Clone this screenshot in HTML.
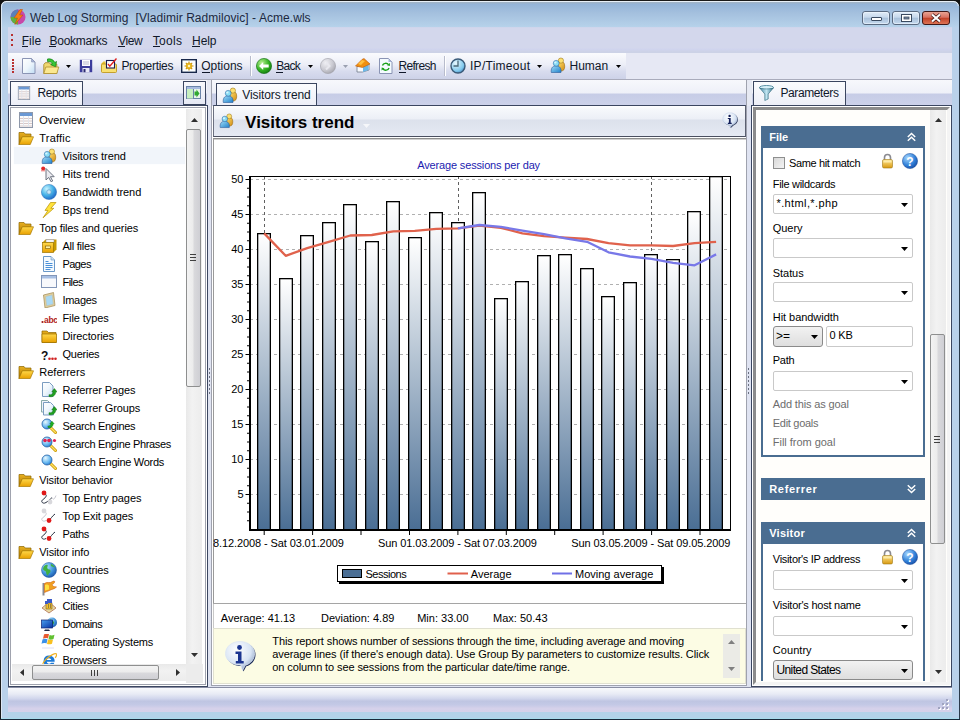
<!DOCTYPE html><html><head><meta charset="utf-8"><style>html,body{margin:0;padding:0;}body{width:960px;height:720px;position:relative;overflow:hidden;font-family:"Liberation Sans",sans-serif;}div,span,svg{position:absolute;}.t{white-space:nowrap;}</style></head><body><svg width="0" height="0" style="position:absolute"><defs>
<linearGradient id="gBlueP" x1="0" y1="0" x2="1" y2="1"><stop offset="0" stop-color="#9fdcf8"/><stop offset="1" stop-color="#1f7fc8"/></linearGradient>
<linearGradient id="gYelP" x1="0" y1="0" x2="1" y2="1"><stop offset="0" stop-color="#ffe070"/><stop offset="1" stop-color="#d08a10"/></linearGradient>
<linearGradient id="gFold" x1="0" y1="0" x2="0" y2="1"><stop offset="0" stop-color="#ffd84a"/><stop offset="1" stop-color="#e8a000"/></linearGradient>
<linearGradient id="gFoldB" x1="0" y1="0" x2="0" y2="1"><stop offset="0" stop-color="#e8b020"/><stop offset="1" stop-color="#b07800"/></linearGradient>
<radialGradient id="gDisc" cx="0.35" cy="0.3" r="0.8"><stop offset="0" stop-color="#c8f4ff"/><stop offset="0.5" stop-color="#48b4e8"/><stop offset="1" stop-color="#1858c0"/></radialGradient>
<radialGradient id="gGlobe" cx="0.35" cy="0.3" r="0.8"><stop offset="0" stop-color="#a8e0ff"/><stop offset="0.6" stop-color="#3a8ed8"/><stop offset="1" stop-color="#1a4ea0"/></radialGradient>
<radialGradient id="gLens" cx="0.35" cy="0.3" r="0.8"><stop offset="0" stop-color="#e8f8ff"/><stop offset="0.6" stop-color="#68b8f0"/><stop offset="1" stop-color="#2070c8"/></radialGradient>
<radialGradient id="gGreen" cx="0.35" cy="0.3" r="0.8"><stop offset="0" stop-color="#b8f090"/><stop offset="0.6" stop-color="#30b020"/><stop offset="1" stop-color="#107010"/></radialGradient>
<radialGradient id="gGray" cx="0.35" cy="0.3" r="0.8"><stop offset="0" stop-color="#f0f0f4"/><stop offset="0.6" stop-color="#c8c8d0"/><stop offset="1" stop-color="#a0a0a8"/></radialGradient>
<radialGradient id="gClock" cx="0.35" cy="0.3" r="0.8"><stop offset="0" stop-color="#e8f8ff"/><stop offset="0.7" stop-color="#80c8ec"/><stop offset="1" stop-color="#3a7ab8"/></radialGradient>
<radialGradient id="gHelp" cx="0.35" cy="0.3" r="0.8"><stop offset="0" stop-color="#a8d8ff"/><stop offset="0.6" stop-color="#3080d8"/><stop offset="1" stop-color="#1848a0"/></radialGradient>
<radialGradient id="gInfo" cx="0.4" cy="0.3" r="0.8"><stop offset="0" stop-color="#ffffff"/><stop offset="0.6" stop-color="#d8e4f4"/><stop offset="1" stop-color="#7890b8"/></radialGradient>
<linearGradient id="gDoc" x1="0" y1="0" x2="1" y2="1"><stop offset="0" stop-color="#ffffff"/><stop offset="0.5" stop-color="#eef6fc"/><stop offset="1" stop-color="#c0dcf4"/></linearGradient>
<linearGradient id="gLock" x1="0" y1="0" x2="0" y2="1"><stop offset="0" stop-color="#ffe890"/><stop offset="1" stop-color="#d89810"/></linearGradient>
<linearGradient id="gMon" x1="0" y1="0" x2="1" y2="1"><stop offset="0" stop-color="#4aa0f0"/><stop offset="1" stop-color="#0830a0"/></linearGradient>
<linearGradient id="gFunnel" x1="0" y1="0" x2="1" y2="0"><stop offset="0" stop-color="#4a8aa8"/><stop offset="0.5" stop-color="#c0e4f0"/><stop offset="1" stop-color="#3a7890"/></linearGradient>
<linearGradient id="gBtnMin" x1="0" y1="0" x2="0" y2="1"><stop offset="0" stop-color="#e4eef8"/><stop offset="0.45" stop-color="#c6d8ec"/><stop offset="0.5" stop-color="#a8c0da"/><stop offset="1" stop-color="#c8dcf0"/></linearGradient>
<linearGradient id="gBtnClose" x1="0" y1="0" x2="0" y2="1"><stop offset="0" stop-color="#eaa898"/><stop offset="0.45" stop-color="#d87060"/><stop offset="0.5" stop-color="#c04028"/><stop offset="1" stop-color="#e07858"/></linearGradient>
</defs></svg>
<div style="left:0px;top:0px;width:960px;height:720px;background:#b9d1ea;"></div>
<div style="left:0px;top:0px;width:960px;height:1px;background:#1a1a1a;"></div>
<div style="left:0px;top:0px;width:1px;height:720px;background:#1a1a1a;"></div>
<div style="left:959px;top:0px;width:1px;height:720px;background:#2a3a4a;"></div>
<div style="left:0px;top:719px;width:960px;height:1px;background:#1a2a3a;"></div>
<div style="left:1px;top:1px;width:958px;height:26px;background:linear-gradient(#e8f0f8 0px,#e8f0f8 1px,#a0b4c8 1px,#a0b4c8 2px,#94b4d8 3px,#a4c0de 12px,#b6d2ea 26px);"></div>
<div style="left:1px;top:1px;width:958px;height:1px;background:#e8f0f8;"></div>
<div style="left:1px;top:1px;width:1px;height:718px;background:#dde8f4;"></div>
<svg style="position:absolute;left:0px;top:0px;" width="6" height="6" viewBox="0 0 6 6"><path d="M0 0h6v1.2A4.8 4.8 0 0 0 1.2 6H0z" fill="#111"/><path d="M1.7 6A4.3 4.3 0 0 1 6 1.7" fill="none" stroke="#e8f0f8" stroke-width="1"/></svg>
<svg style="position:absolute;left:954px;top:0px;" width="6" height="6" viewBox="0 0 6 6"><path d="M6 0H0v1.2A4.8 4.8 0 0 1 4.8 6H6z" fill="#111"/><path d="M0 1.7A4.3 4.3 0 0 1 4.3 6" fill="none" stroke="#e8f0f8" stroke-width="1"/></svg>
<span class="t" style="left:30px;top:11.54px;font-size:12px;line-height:12px;color:#1c2840;letter-spacing:-0.057px;">Web Log Storming</span>
<span class="t" style="left:135.6px;top:11.54px;font-size:12px;line-height:12px;color:#1c2840;letter-spacing:0.053px;">[Vladimir Radmilovic] - Acme.wls</span>
<div style="left:8px;top:27px;width:944px;height:685px;background:#dfe3f1;"></div>
<div style="left:8px;top:27px;width:944px;height:26px;background:linear-gradient(#cad4ec 0px,#d3d7ec 1px,#d3d7ec 21px,#d0d4ee 22px,#ccd2e6 25px);"></div>
<span class="t" style="left:21.7px;top:34.84px;font-size:12px;line-height:12px;color:#10182a;letter-spacing:0.055px;">File</span>
<span class="t" style="left:49.5px;top:34.84px;font-size:12px;line-height:12px;color:#10182a;letter-spacing:-0.252px;">Bookmarks</span>
<span class="t" style="left:118.3px;top:34.84px;font-size:12px;line-height:12px;color:#10182a;letter-spacing:-0.464px;">View</span>
<span class="t" style="left:152.8px;top:34.84px;font-size:12px;line-height:12px;color:#10182a;letter-spacing:0.297px;">Tools</span>
<span class="t" style="left:192.1px;top:34.84px;font-size:12px;line-height:12px;color:#10182a;letter-spacing:-0.093px;">Help</span>
<div style="left:8px;top:53px;width:619px;height:26px;background:linear-gradient(#fafbfd 0%,#eceef7 45%,#d8dcee 70%,#cdd2e8 100%);border-right:1px solid #c8cce0;box-sizing:border-box;"></div>
<div style="left:626px;top:53px;width:326px;height:26px;background:#e6e8f4;"></div>
<div style="left:8px;top:79px;width:944px;height:1px;background:#a9abbb;"></div>
<span class="t" style="left:121.4px;top:60.44px;font-size:12px;line-height:12px;color:#10182a;letter-spacing:-0.288px;">Properties</span>
<span class="t" style="left:201.3px;top:60.44px;font-size:12px;line-height:12px;color:#10182a;letter-spacing:-0.009px;">Options</span>
<span class="t" style="left:276.2px;top:60.44px;font-size:12px;line-height:12px;color:#10182a;letter-spacing:-0.692px;">Back</span>
<span class="t" style="left:398.5px;top:60.44px;font-size:12px;line-height:12px;color:#10182a;letter-spacing:-0.686px;">Refresh</span>
<span class="t" style="left:470px;top:60.44px;font-size:12px;line-height:12px;color:#10182a;letter-spacing:0.270px;">IP/Timeout</span>
<span class="t" style="left:569.5px;top:60.44px;font-size:12px;line-height:12px;color:#10182a;letter-spacing:-0.020px;">Human</span>
<div style="left:8px;top:80px;width:944px;height:607px;background:#dfe3f1;"></div>
<div style="left:8px;top:80px;width:200px;height:26px;background:linear-gradient(#f7f8fc 0%,#eef0f8 50%,#c6cce6 54%,#cdd2ea 100%);"></div>
<div style="left:212px;top:80px;width:535px;height:26px;background:linear-gradient(#f7f8fc 0%,#eef0f8 50%,#c6cce6 54%,#cdd2ea 100%);"></div>
<div style="left:752px;top:80px;width:200px;height:26px;background:linear-gradient(#f7f8fc 0%,#eef0f8 50%,#c6cce6 54%,#cdd2ea 100%);"></div>
<div style="left:207px;top:80px;width:4px;height:26px;background:#e6e9f3;"></div>
<div style="left:747px;top:80px;width:5px;height:26px;background:#e6e9f3;"></div>
<div style="left:10px;top:81px;width:73px;height:25px;background:linear-gradient(#fbfcfe,#eceef7);border:1px solid #3b4660;border-bottom:none;box-sizing:border-box;"></div>
<span class="t" style="left:37.5px;top:86.54px;font-size:12px;line-height:12px;color:#10182a;letter-spacing:-0.469px;">Reports</span>
<div style="left:183px;top:81px;width:23px;height:24px;background:linear-gradient(#f7f8fc,#e6e9f4);border:1px solid #3b4660;box-sizing:border-box;"></div>
<div style="left:8px;top:105px;width:200px;height:582px;background:#fff;border:1px solid #3b4660;box-sizing:border-box;"></div>
<div style="left:10px;top:107px;width:196px;height:578px;border:1px solid #a0a3ae;box-sizing:border-box;background:#fff;"></div>
<div style="left:14px;top:147px;width:171px;height:17px;background:#f1f5fa;box-shadow:0 0 1px #f4f7fb;"></div>
<div style="left:11px;top:108px;width:175px;height:556px;overflow:hidden;">
<span class="t" style="left:28.25px;top:6.94px;font-size:11px;line-height:11px;color:#000;letter-spacing:-0.013px;">Overview</span>
<svg style="position:absolute;left:7px;top:4.0px" width="16" height="16" viewBox="0 0 16 16"><rect x="1.5" y="0.5" width="13" height="15" fill="#fbfbfb" stroke="#8e98aa"/><rect x="2" y="1" width="12" height="3" fill="#6a98d4"/><path d="M2 6.5h12M2 9h12M2 11.5h12M2 14h12" stroke="#d8c8c8" stroke-width="1"/><path d="M5.5 4v11M10.5 4v11" stroke="#e0e4ec" stroke-width="1"/></svg>
<span class="t" style="left:28.25px;top:24.94px;font-size:11px;line-height:11px;color:#000;letter-spacing:0.213px;">Traffic</span>
<svg style="position:absolute;left:7px;top:22.0px" width="16" height="16" viewBox="0 0 16 16"><path d="M1 2.5h5l1.2 1.5H13v3H4.5L1 14.5z" fill="url(#gFoldB)" stroke="#8a6400" stroke-width=".7"/><path d="M1 14.5L4.3 6.8H15.5L12.3 14.5z" fill="url(#gFold)" stroke="#a87800" stroke-width=".7"/></svg>
<span class="t" style="left:51.5px;top:42.94px;font-size:11px;line-height:11px;color:#000;letter-spacing:-0.043px;">Visitors trend</span>
<svg style="position:absolute;left:30px;top:40.0px" width="16" height="16" viewBox="0 0 16 16"><ellipse cx="11.4" cy="9.3" rx="3.3" ry="4.6" fill="url(#gYelP)" stroke="#9a6a10" stroke-width=".6"/><circle cx="10.9" cy="3.6" r="2.6" fill="#fce070" stroke="#a07818" stroke-width=".6"/><path d="M1.3 15.5C.8 12 2 8.8 6 8.8s5.6 3 5 6.7z" fill="url(#gBlueP)" stroke="#2a5a98" stroke-width=".6"/><circle cx="6.2" cy="6.3" r="2.9" fill="#8adcf4" stroke="#2a6aa8" stroke-width=".6"/><ellipse cx="5.3" cy="5.6" rx="1.2" ry="1" fill="#e8fbff" opacity=".8"/></svg>
<span class="t" style="left:51.5px;top:60.94px;font-size:11px;line-height:11px;color:#000;letter-spacing:0.013px;">Hits trend</span>
<svg style="position:absolute;left:30px;top:58.0px" width="16" height="16" viewBox="0 0 16 16"><circle cx="2.2" cy="2.6" r="2" fill="#e02828"/><path d="M0 4.8h4" stroke="#f07070" stroke-width="1"/><path d="M5 2.5v11.5l2.7-2.6 2.4 4.4 1.6-.8-2.3-4.3h3.8z" fill="#ebebf0" stroke="#6e7480" stroke-width="1"/></svg>
<span class="t" style="left:51.5px;top:78.94px;font-size:11px;line-height:11px;color:#000;letter-spacing:-0.053px;">Bandwidth trend</span>
<svg style="position:absolute;left:30px;top:76.0px" width="16" height="16" viewBox="0 0 16 16"><circle cx="8" cy="8" r="7.6" fill="url(#gDisc)" stroke="#2a70b8" stroke-width=".5"/><circle cx="8" cy="8" r="2.2" fill="#c8e8f8" stroke="#5a90c0" stroke-width=".6"/></svg>
<span class="t" style="left:51.5px;top:96.94px;font-size:11px;line-height:11px;color:#000;letter-spacing:-0.095px;">Bps trend</span>
<svg style="position:absolute;left:30px;top:94.0px" width="16" height="16" viewBox="0 0 16 16"><path d="M9.5 .5h5.5L9.8 6.3h3L2 15.8l5-7.4H4z" fill="#ffe23a" stroke="#b89000" stroke-width=".7"/></svg>
<span class="t" style="left:28.25px;top:114.94px;font-size:11px;line-height:11px;color:#000;letter-spacing:-0.094px;">Top files and queries</span>
<svg style="position:absolute;left:7px;top:112.0px" width="16" height="16" viewBox="0 0 16 16"><path d="M1 2.5h5l1.2 1.5H13v3H4.5L1 14.5z" fill="url(#gFoldB)" stroke="#8a6400" stroke-width=".7"/><path d="M1 14.5L4.3 6.8H15.5L12.3 14.5z" fill="url(#gFold)" stroke="#a87800" stroke-width=".7"/></svg>
<span class="t" style="left:51.5px;top:132.94px;font-size:11px;line-height:11px;color:#000;letter-spacing:-0.245px;">All files</span>
<svg style="position:absolute;left:30px;top:130.0px" width="16" height="16" viewBox="0 0 16 16"><path d="M1.5 4.5L4.5 1.5H15.5V11.5L12.5 14.5z" fill="#c89a00"/><path d="M5 1.5h8v3H5z" fill="#f4f4f8" stroke="#889" stroke-width=".5"/><rect x="1.5" y="4.5" width="11" height="10" fill="url(#gFold)" stroke="#9a7400" stroke-width=".7"/><rect x="4.5" y="8" width="5" height="2.5" fill="#fff0a0" stroke="#7a5a00" stroke-width=".6"/></svg>
<span class="t" style="left:51.5px;top:150.94px;font-size:11px;line-height:11px;color:#000;letter-spacing:-0.570px;">Pages</span>
<svg style="position:absolute;left:30px;top:148.0px" width="16" height="16" viewBox="0 0 16 16"><path d="M2.5 .5h7.5l3.5 3.5v11.5H2.5z" fill="#f4faff" stroke="#6a98c8"/><path d="M10 .5v3.5h3.5" fill="#c8dcf0" stroke="#6a98c8" stroke-width=".6"/><path d="M4.5 5.5h3M4.5 7.5h7M4.5 9.5h7M4.5 11.5h7M4.5 13.5h5" stroke="#4a90d8" stroke-width="1"/></svg>
<span class="t" style="left:51.5px;top:168.94px;font-size:11px;line-height:11px;color:#000;letter-spacing:-0.570px;">Files</span>
<svg style="position:absolute;left:30px;top:166.0px" width="16" height="16" viewBox="0 0 16 16"><rect x="0.5" y="1.5" width="15" height="12" fill="#f8f9fc" stroke="#8396b8"/><rect x="1" y="2" width="14" height="2.5" fill="#a8c0e4"/></svg>
<span class="t" style="left:51.5px;top:186.94px;font-size:11px;line-height:11px;color:#000;letter-spacing:-0.320px;">Images</span>
<svg style="position:absolute;left:30px;top:184.0px" width="16" height="16" viewBox="0 0 16 16"><path d="M2.5 3l10-2.5 1.5 13-10 2.5z" fill="#e0d0a0" stroke="#a08850" stroke-width=".7"/><path d="M4.5 4.5l6.8-1.7 1 9.4-6.8 1.7z" fill="#a8d8f4" stroke="#c8b890" stroke-width=".5"/></svg>
<span class="t" style="left:51.5px;top:204.94px;font-size:11px;line-height:11px;color:#000;letter-spacing:-0.098px;">File types</span>
<svg style="position:absolute;left:30px;top:202.0px" width="16" height="16" viewBox="0 0 16 16"><circle cx="1.5" cy="12" r="1.1" fill="#a01818"/><text x="3" y="12.5" font-family="Liberation Sans" font-weight="bold" font-size="8.5" fill="#b02020" letter-spacing="-.3">abc</text></svg>
<span class="t" style="left:51.5px;top:222.94px;font-size:11px;line-height:11px;color:#000;letter-spacing:-0.100px;">Directories</span>
<svg style="position:absolute;left:30px;top:220.0px" width="16" height="16" viewBox="0 0 16 16"><path d="M1 3h5l1.5 1.5h7.5v10H1z" fill="url(#gFoldB)" stroke="#8a6400" stroke-width=".7"/><path d="M1 6h14.5v8.5H1z" fill="url(#gFold)" stroke="#a07400" stroke-width=".7"/></svg>
<span class="t" style="left:51.5px;top:240.94px;font-size:11px;line-height:11px;color:#000;letter-spacing:-0.253px;">Queries</span>
<svg style="position:absolute;left:30px;top:238.0px" width="16" height="16" viewBox="0 0 16 16"><text x="0" y="14" font-family="Liberation Sans" font-weight="bold" font-size="12" fill="#101010">?</text><circle cx="8.5" cy="12.8" r="1.3" fill="#d02020"/><circle cx="11.5" cy="12.8" r="1.3" fill="#d02020"/><circle cx="14.5" cy="12.8" r="1.3" fill="#d02020"/></svg>
<span class="t" style="left:28.25px;top:258.94px;font-size:11px;line-height:11px;color:#000;letter-spacing:0.005px;">Referrers</span>
<svg style="position:absolute;left:7px;top:256.0px" width="16" height="16" viewBox="0 0 16 16"><path d="M1 2.5h5l1.2 1.5H13v3H4.5L1 14.5z" fill="url(#gFoldB)" stroke="#8a6400" stroke-width=".7"/><path d="M1 14.5L4.3 6.8H15.5L12.3 14.5z" fill="url(#gFold)" stroke="#a87800" stroke-width=".7"/></svg>
<span class="t" style="left:51.5px;top:276.94px;font-size:11px;line-height:11px;color:#000;letter-spacing:-0.120px;">Referrer Pages</span>
<svg style="position:absolute;left:30px;top:274.0px" width="16" height="16" viewBox="0 0 16 16"><path d="M1.5 .5h7l3.5 3.5v10.5H1.5z" fill="url(#gDoc)" stroke="#7a9cc0"/><path d="M8 14.5c3.5 1 6.5-1 6.8-4.5l1.2-.2-2.6-3.2-2.6 3.2 1.3.1c-.2 2-1.8 3.2-4.1 2.8z" fill="#20a020" stroke="#107010" stroke-width=".5"/></svg>
<span class="t" style="left:51.5px;top:294.94px;font-size:11px;line-height:11px;color:#000;letter-spacing:-0.120px;">Referrer Groups</span>
<svg style="position:absolute;left:30px;top:292.0px" width="16" height="16" viewBox="0 0 16 16"><path d="M0.5 .5h6l3 3v8.5H.5z" fill="#eef4fa" stroke="#8aa"/><path d="M2.5 2.5h7l3 3v9.5H2.5z" fill="url(#gDoc)" stroke="#7a9cc0"/><path d="M8 14.5c3.5 1 6.5-1 6.8-4.5l1.2-.2-2.6-3.2-2.6 3.2 1.3.1c-.2 2-1.8 3.2-4.1 2.8z" fill="#20a020" stroke="#107010" stroke-width=".5"/></svg>
<span class="t" style="left:51.5px;top:312.94px;font-size:11px;line-height:11px;color:#000;letter-spacing:-0.351px;">Search Engines</span>
<svg style="position:absolute;left:30px;top:310.0px" width="16" height="16" viewBox="0 0 16 16"><path d="M9 9l5.5 5.5" stroke="#c89800" stroke-width="3" stroke-linecap="round"/><path d="M9 9l5.5 5.5" stroke="#ffe060" stroke-width="1.4" stroke-linecap="round"/><circle cx="6" cy="6" r="5" fill="url(#gLens)" stroke="#2060a8" stroke-width=".8"/><path d="M7 9.5c2.5 .8 5-.6 5.2-3.5l1-.2-2.2-2.6-2.2 2.6 1.1.1c-.2 1.5-1.4 2.3-3 2z" fill="#20b020" stroke="#107010" stroke-width=".4"/></svg>
<span class="t" style="left:51.5px;top:330.94px;font-size:11px;line-height:11px;color:#000;letter-spacing:-0.341px;">Search Engine Phrases</span>
<svg style="position:absolute;left:30px;top:328.0px" width="16" height="16" viewBox="0 0 16 16"><path d="M9 9l5.5 5.5" stroke="#c89800" stroke-width="3" stroke-linecap="round"/><path d="M9 9l5.5 5.5" stroke="#ffe060" stroke-width="1.4" stroke-linecap="round"/><circle cx="6" cy="6" r="5" fill="url(#gLens)" stroke="#2060a8" stroke-width=".8"/><circle cx="4" cy="4.5" r="1.8" fill="#e02050"/><circle cx="8" cy="4.5" r="1.8" fill="#e02050"/><circle cx="13.5" cy="4.5" r="1.6" fill="#e02050"/></svg>
<span class="t" style="left:51.5px;top:348.94px;font-size:11px;line-height:11px;color:#000;letter-spacing:-0.276px;">Search Engine Words</span>
<svg style="position:absolute;left:30px;top:346.0px" width="16" height="16" viewBox="0 0 16 16"><path d="M9 9l5.5 5.5" stroke="#c89800" stroke-width="3" stroke-linecap="round"/><path d="M9 9l5.5 5.5" stroke="#ffe060" stroke-width="1.4" stroke-linecap="round"/><circle cx="6" cy="6" r="5" fill="url(#gLens)" stroke="#2060a8" stroke-width=".8"/></svg>
<span class="t" style="left:28.25px;top:366.94px;font-size:11px;line-height:11px;color:#000;letter-spacing:-0.120px;">Visitor behavior</span>
<svg style="position:absolute;left:7px;top:364.0px" width="16" height="16" viewBox="0 0 16 16"><path d="M1 2.5h5l1.2 1.5H13v3H4.5L1 14.5z" fill="url(#gFoldB)" stroke="#8a6400" stroke-width=".7"/><path d="M1 14.5L4.3 6.8H15.5L12.3 14.5z" fill="url(#gFold)" stroke="#a87800" stroke-width=".7"/></svg>
<span class="t" style="left:51.5px;top:384.94px;font-size:11px;line-height:11px;color:#000;letter-spacing:-0.034px;">Top Entry pages</span>
<svg style="position:absolute;left:30px;top:382.0px" width="16" height="16" viewBox="0 0 16 16"><path d="M3 3.5c4 1 2 4-1 6s0 5 3 3 4-3 6-5" fill="none" stroke="#283040" stroke-width="1"/><path d="M11 7.5c1 2 2 3 4-2" fill="none" stroke="#c8c8d0" stroke-width="1"/><circle cx="3" cy="3" r="2.4" fill="#e01818"/><circle cx="9" cy="12" r="2.4" fill="#d8d8dc"/></svg>
<span class="t" style="left:51.5px;top:402.94px;font-size:11px;line-height:11px;color:#000;letter-spacing:-0.105px;">Top Exit pages</span>
<svg style="position:absolute;left:30px;top:400.0px" width="16" height="16" viewBox="0 0 16 16"><path d="M3 3.5c4 1 2 4-1 6s0 5 3 3" fill="none" stroke="#c8c8d0" stroke-width="1"/><path d="M8 12c2-1 3-4 6-6" fill="none" stroke="#283040" stroke-width="1"/><circle cx="3" cy="3" r="2.4" fill="#d8d8dc"/><circle cx="8" cy="12.5" r="2.4" fill="#e01818"/></svg>
<span class="t" style="left:51.5px;top:420.94px;font-size:11px;line-height:11px;color:#000;letter-spacing:-0.320px;">Paths</span>
<svg style="position:absolute;left:30px;top:418.0px" width="16" height="16" viewBox="0 0 16 16"><path d="M3 3.5c4 1 2 4-1 6s0 5 3 3" fill="none" stroke="#283040" stroke-width="1"/><path d="M8 12c2-1 3-4 6-6" fill="none" stroke="#283040" stroke-width="1"/><circle cx="3" cy="3" r="2.4" fill="#e01818"/><circle cx="8" cy="12.5" r="2.4" fill="#e01818"/></svg>
<span class="t" style="left:28.25px;top:438.94px;font-size:11px;line-height:11px;color:#000;letter-spacing:-0.102px;">Visitor info</span>
<svg style="position:absolute;left:7px;top:436.0px" width="16" height="16" viewBox="0 0 16 16"><path d="M1 2.5h5l1.2 1.5H13v3H4.5L1 14.5z" fill="url(#gFoldB)" stroke="#8a6400" stroke-width=".7"/><path d="M1 14.5L4.3 6.8H15.5L12.3 14.5z" fill="url(#gFold)" stroke="#a87800" stroke-width=".7"/></svg>
<span class="t" style="left:51.5px;top:456.94px;font-size:11px;line-height:11px;color:#000;letter-spacing:-0.095px;">Countries</span>
<svg style="position:absolute;left:30px;top:454.0px" width="16" height="16" viewBox="0 0 16 16"><circle cx="8" cy="8" r="7.5" fill="url(#gGlobe)" stroke="#1a50a0" stroke-width=".5"/><path d="M2.5 5c1.5-2 3-2.5 4-2 1 1-1 2 0 3.5s3 .5 3 2.5-2 2-2.5 4.5c-1 0-2-2-2-3.5S2.5 9 2 7z" fill="#40b040"/><path d="M10 2c2 .5 3.5 2 4 3.5-1 0-2-1-3-1s-1.5-1.5-1-2.5z" fill="#40b040"/></svg>
<span class="t" style="left:51.5px;top:474.94px;font-size:11px;line-height:11px;color:#000;letter-spacing:-0.420px;">Regions</span>
<svg style="position:absolute;left:30px;top:472.0px" width="16" height="16" viewBox="0 0 16 16"><path d="M2.5 3v12.5" stroke="#8a8a90" stroke-width="2"/><path d="M3.5 3.5c3-2.5 5 .5 8-2 2-1 2.5 0 2 1-1 2-3 1-2 3 1 1.5 3 1 4 1.5-2.5 2.5-5 2-7 3.5-2 1-3.5 1-5 2z" fill="#f0a020" stroke="#d06010" stroke-width=".6"/><path d="M4 5c2-1 3 0 4 .5v4c-1.5.5-2.5.5-4 1z" fill="#ffe040"/></svg>
<span class="t" style="left:51.5px;top:492.94px;font-size:11px;line-height:11px;color:#000;letter-spacing:-0.260px;">Cities</span>
<svg style="position:absolute;left:30px;top:490.0px" width="16" height="16" viewBox="0 0 16 16"><path d="M1 10l7-6 7 6-7 5z" fill="#e8d8a0" stroke="#b07050" stroke-width=".8"/><rect x="5" y="5" width="6" height="6" fill="#f0c030" stroke="#806020" stroke-width=".6"/><path d="M6 1h5v4H6z" fill="#3a5ac8"/><path d="M4 3h3v3H4z" fill="#3a5ac8"/><path d="M7 7h1M9 7h1M7 9h1M9 9h1" stroke="#404040" stroke-width="1"/></svg>
<span class="t" style="left:51.5px;top:510.94px;font-size:11px;line-height:11px;color:#000;letter-spacing:-0.537px;">Domains</span>
<svg style="position:absolute;left:30px;top:508.0px" width="16" height="16" viewBox="0 0 16 16"><circle cx="11" cy="6.5" r="5" fill="url(#gGlobe)"/><path d="M8.5 4c1-1 2-.5 2.5.5s2 .5 2 2-1.5 1.5-1.5 3c-1-.5-2-1-2-2.5z" fill="#30a030"/><rect x=".5" y="4" width="11" height="8" fill="url(#gMon)" stroke="#102070" stroke-width=".7"/><path d="M4 13.5h4l1 1.5H3z" fill="#202848"/></svg>
<span class="t" style="left:51.5px;top:528.94px;font-size:11px;line-height:11px;color:#000;letter-spacing:-0.170px;">Operating Systems</span>
<svg style="position:absolute;left:30px;top:526.0px" width="16" height="16" viewBox="0 0 16 16"><path d="M1.5 5.5c1.5-1 3-1 5-.3l-1 4.3c-2-.6-3.4-.6-5 .3z" fill="#3a90e8"/><path d="M3 .5c1.5-1 3-1 5-.3l-1 4.3c-2-.6-3.4-.6-5 .3z" fill="#e85a30"/><path d="M8.5 1c1.6.6 3.2 .6 5-.2l-1 4.3c-1.8.8-3.4.8-5 .2z" fill="#60c030"/><path d="M7 5.6c1.6.6 3.2 .6 5-.2l-1 4.3c-1.8.8-3.4.8-5 .2z" fill="#f8c020"/><path d="M1 14h12" stroke="#d8d8f0" stroke-width=".8"/></svg>
<span class="t" style="left:51.5px;top:546.94px;font-size:11px;line-height:11px;color:#000;letter-spacing:-0.234px;">Browsers</span>
<svg style="position:absolute;left:30px;top:544.0px" width="16" height="16" viewBox="0 0 16 16"><path d="M8 3.5a5.5 5.5 0 1 0 5.3 7.3h-3.2a2.5 2.5 0 0 1-4.4-1H13.6A5.5 5.5 0 0 0 8 3.5zm-2.3 4.5a2.4 2.4 0 0 1 4.6 0z" fill="#1c7ad8"/><path d="M2 14c-1-1.5 1-5.5 5-8.5s7.5-4.5 8.5-3.5c.5 .7-.2 2.3-1.3 3.8" fill="none" stroke="#f0b020" stroke-width="1.2"/></svg>
</div>
<div style="left:186px;top:109px;width:16px;height:555px;background:linear-gradient(90deg,#e9e9e9,#f2f2f2 40%,#ececec);"></div>
<div style="left:186px;top:129px;width:15px;height:258px;background:linear-gradient(90deg,#f3f3f3 0%,#ececec 45%,#d9d9dc 55%,#cfcfd4 100%);border:1px solid #8e8f8f;border-radius:2px;box-sizing:border-box;"></div>
<div style="left:12px;top:664px;width:174px;height:17px;background:linear-gradient(#e9e9e9,#f2f2f2 40%,#ececec);"></div>
<div style="left:32px;top:665px;width:127px;height:15px;background:linear-gradient(#f3f3f3 0%,#ececec 45%,#d9d9dc 55%,#cfcfd4 100%);border:1px solid #8e8f8f;border-radius:2px;box-sizing:border-box;"></div>
<div style="left:186px;top:664px;width:17px;height:19px;background:#ececec;"></div>
<div style="left:211px;top:80px;width:536px;height:606px;background:#fff;border:1px solid #9fa2ae;border-top:none;box-sizing:border-box;"></div>
<div style="left:212px;top:80px;width:534px;height:26px;background:linear-gradient(#f7f8fc 0%,#eef0f8 50%,#c6cce6 54%,#cdd2ea 100%);"></div>
<div style="left:216px;top:83px;width:101px;height:23px;background:linear-gradient(#fbfcfe,#eceef7);border:1px solid #3b4660;border-bottom:none;box-sizing:border-box;"></div>
<span class="t" style="left:242.3px;top:89.24px;font-size:12px;line-height:12px;color:#10182a;letter-spacing:-0.108px;">Visitors trend</span>
<div style="left:213px;top:105px;width:533px;height:32px;background:linear-gradient(#ffffff 0px,#f6f8fb 3px,#eceff6 13px,#dce1ec 14px,#dfe4ee 20px,#e6eaf4 30px);border-top:1px solid #3b4660;border-left:1px solid #6b7080;border-right:1px solid #5a5f70;border-bottom:1px solid #4a4f60;box-sizing:border-box;"></div>
<span class="t" style="left:245.1px;top:113.51px;font-size:17px;line-height:17px;color:#000;font-weight:bold;letter-spacing:0.003px;">Visitors trend</span>
<svg style="position:absolute;left:363px;top:124px;" width="8" height="5" viewBox="0 0 8 5"><path d="M0 0h7L3.5 4z" fill="#fff" opacity=".7"/></svg>
<div style="left:213px;top:138px;width:533px;height:466px;background:#fff;border-top:1px solid #8e8e8e;border-left:1px solid #9a9a9a;box-sizing:border-box;"></div>
<div style="left:214px;top:139px;width:532px;height:1px;background:#d0d0d0;"></div>
<div style="left:213px;top:603px;width:533px;height:1px;background:#a5a5a5;"></div>
<div style="left:213px;top:604px;width:533px;height:24px;background:#fff;border-left:1px solid #c8c8c8;box-sizing:border-box;"></div>
<span class="t" style="left:220.8px;top:612.69px;font-size:11px;line-height:11px;color:#000;">Average: 41.13</span>
<span class="t" style="left:321px;top:612.69px;font-size:11px;line-height:11px;color:#000;">Deviation: 4.89</span>
<span class="t" style="left:417.2px;top:612.69px;font-size:11px;line-height:11px;color:#000;">Min: 33.00</span>
<span class="t" style="left:493.1px;top:612.69px;font-size:11px;line-height:11px;color:#000;">Max: 50.43</span>
<div style="left:213px;top:628px;width:533px;height:56px;background:#fcfce4;border:1px solid #e0e0d0;box-sizing:border-box;"></div>
<span class="t" style="left:272.3px;top:636.29px;font-size:11px;line-height:11px;color:#000;letter-spacing:-0.100px;">This report shows number of sessions through the time, including average and moving</span>
<span class="t" style="left:272.3px;top:648.99px;font-size:11px;line-height:11px;color:#000;letter-spacing:-0.093px;">average lines (if there&#x27;s enough data). Use Group By parameters to customize results. Click</span>
<span class="t" style="left:272.3px;top:661.69px;font-size:11px;line-height:11px;color:#000;letter-spacing:-0.1px;">on column to see sessions from the particular date/time range.</span>
<div style="left:723px;top:634px;width:17px;height:44px;background:#ebebe6;"></div>
<svg style="position:absolute;left:213px;top:138px;" width="533" height="465" viewBox="213 138 533 465"><defs><linearGradient id="bg" x1="0" y1="0" x2="0" y2="1"><stop offset="0" stop-color="#ffffff"/><stop offset="1" stop-color="#4a6e94"/></linearGradient><linearGradient id="bh" x1="0" y1="0" x2="1" y2="0"><stop offset="0" stop-color="#fff" stop-opacity="0.15"/><stop offset="0.4" stop-color="#fff" stop-opacity="0"/><stop offset="1" stop-color="#000" stop-opacity="0.06"/></linearGradient><clipPath id="pc"><rect x="250" y="176" width="481" height="355"/></clipPath></defs><text x="417.2" y="168.7" font-size="11" fill="#1c1cb0" letter-spacing="-0.15" font-family="Liberation Sans">Average sessions per day</text><line x1="250" y1="494.5" x2="730" y2="494.5" stroke="#b0b0b0" stroke-width="1" stroke-dasharray="3 3"/><line x1="250" y1="459.5" x2="730" y2="459.5" stroke="#b0b0b0" stroke-width="1" stroke-dasharray="3 3"/><line x1="250" y1="424.5" x2="730" y2="424.5" stroke="#b0b0b0" stroke-width="1" stroke-dasharray="3 3"/><line x1="250" y1="389.5" x2="730" y2="389.5" stroke="#b0b0b0" stroke-width="1" stroke-dasharray="3 3"/><line x1="250" y1="354.5" x2="730" y2="354.5" stroke="#b0b0b0" stroke-width="1" stroke-dasharray="3 3"/><line x1="250" y1="319.5" x2="730" y2="319.5" stroke="#b0b0b0" stroke-width="1" stroke-dasharray="3 3"/><line x1="250" y1="284.5" x2="730" y2="284.5" stroke="#b0b0b0" stroke-width="1" stroke-dasharray="3 3"/><line x1="250" y1="249.5" x2="730" y2="249.5" stroke="#b0b0b0" stroke-width="1" stroke-dasharray="3 3"/><line x1="250" y1="214.5" x2="730" y2="214.5" stroke="#b0b0b0" stroke-width="1" stroke-dasharray="3 3"/><line x1="250" y1="179.5" x2="730" y2="179.5" stroke="#b0b0b0" stroke-width="1" stroke-dasharray="3 3"/><line x1="264.5" y1="176" x2="264.5" y2="529" stroke="#606060" stroke-width="1" stroke-dasharray="3 3"/><line x1="458.5" y1="176" x2="458.5" y2="529" stroke="#606060" stroke-width="1" stroke-dasharray="3 3"/><line x1="651.5" y1="176" x2="651.5" y2="529" stroke="#606060" stroke-width="1" stroke-dasharray="3 3"/><g clip-path="url(#pc)"><rect x="257" y="233" width="14" height="297" fill="#000"/><rect x="258.3" y="234.3" width="11.4" height="295.7" fill="url(#bg)"/><rect x="279" y="278" width="14" height="252" fill="#000"/><rect x="280.3" y="279.3" width="11.4" height="250.7" fill="url(#bg)"/><rect x="300" y="235" width="14" height="295" fill="#000"/><rect x="301.3" y="236.3" width="11.4" height="293.7" fill="url(#bg)"/><rect x="322" y="222" width="14" height="308" fill="#000"/><rect x="323.3" y="223.3" width="11.4" height="306.7" fill="url(#bg)"/><rect x="343" y="204" width="14" height="326" fill="#000"/><rect x="344.3" y="205.3" width="11.4" height="324.7" fill="url(#bg)"/><rect x="365" y="241" width="14" height="289" fill="#000"/><rect x="366.3" y="242.3" width="11.4" height="287.7" fill="url(#bg)"/><rect x="386" y="201" width="14" height="329" fill="#000"/><rect x="387.3" y="202.3" width="11.4" height="327.7" fill="url(#bg)"/><rect x="408" y="237" width="14" height="293" fill="#000"/><rect x="409.3" y="238.3" width="11.4" height="291.7" fill="url(#bg)"/><rect x="429" y="212" width="14" height="318" fill="#000"/><rect x="430.3" y="213.3" width="11.4" height="316.7" fill="url(#bg)"/><rect x="451" y="222" width="14" height="308" fill="#000"/><rect x="452.3" y="223.3" width="11.4" height="306.7" fill="url(#bg)"/><rect x="472" y="192" width="14" height="338" fill="#000"/><rect x="473.3" y="193.3" width="11.4" height="336.7" fill="url(#bg)"/><rect x="494" y="298" width="14" height="232" fill="#000"/><rect x="495.3" y="299.3" width="11.4" height="230.7" fill="url(#bg)"/><rect x="515" y="281" width="14" height="249" fill="#000"/><rect x="516.3" y="282.3" width="11.4" height="247.7" fill="url(#bg)"/><rect x="537" y="255" width="14" height="275" fill="#000"/><rect x="538.3" y="256.3" width="11.4" height="273.7" fill="url(#bg)"/><rect x="558" y="254" width="14" height="276" fill="#000"/><rect x="559.3" y="255.3" width="11.4" height="274.7" fill="url(#bg)"/><rect x="580" y="268" width="14" height="262" fill="#000"/><rect x="581.3" y="269.3" width="11.4" height="260.7" fill="url(#bg)"/><rect x="601" y="296" width="14" height="234" fill="#000"/><rect x="602.3" y="297.3" width="11.4" height="232.7" fill="url(#bg)"/><rect x="623" y="282" width="14" height="248" fill="#000"/><rect x="624.3" y="283.3" width="11.4" height="246.7" fill="url(#bg)"/><rect x="644" y="254" width="14" height="276" fill="#000"/><rect x="645.3" y="255.3" width="11.4" height="274.7" fill="url(#bg)"/><rect x="666" y="259" width="14" height="271" fill="#000"/><rect x="667.3" y="260.3" width="11.4" height="269.7" fill="url(#bg)"/><rect x="687" y="211" width="14" height="319" fill="#000"/><rect x="688.3" y="212.3" width="11.4" height="317.7" fill="url(#bg)"/><rect x="709" y="176" width="14" height="354" fill="#000"/><rect x="710.3" y="177.3" width="11.4" height="352.7" fill="url(#bg)"/></g><polyline points="264.2,233.4 285.7,255.8 307.2,248.1 328.8,241.8 350.3,235.5 371.8,235.0 393.3,231.3 414.8,230.8 436.4,228.8 457.9,228.3 479.4,225.7 500.9,227.8 522.4,233.4 544.0,236.2 565.5,237.6 587.0,239.0 608.5,243.2 630.0,245.3 651.6,245.3 673.1,246.0 694.6,243.2 716.1,241.8" fill="none" stroke="#e0624c" stroke-width="2.3" stroke-linejoin="round"/><polyline points="457.9,228.3 479.4,225.0 500.9,226.8 522.4,230.6 544.0,234.1 565.5,238.3 587.0,241.8 608.5,252.3 630.0,256.5 651.6,258.8 673.1,262.8 694.6,265.3 716.1,254.4" fill="none" stroke="#7878e8" stroke-width="2.3" stroke-linejoin="round"/><line x1="250" y1="176.5" x2="731" y2="176.5" stroke="#000" stroke-width="1"/><line x1="730.5" y1="176" x2="730.5" y2="531" stroke="#000" stroke-width="1"/><rect x="249" y="176" width="2" height="355" fill="#000"/><rect x="249" y="529" width="482" height="2" fill="#000"/><line x1="245.5" y1="494.5" x2="249" y2="494.5" stroke="#000" stroke-width="1"/><text x="243.5" y="498.1" font-size="11" text-anchor="end" fill="#000" font-family="Liberation Sans">5</text><line x1="245.5" y1="459.5" x2="249" y2="459.5" stroke="#000" stroke-width="1"/><text x="243.5" y="463.1" font-size="11" text-anchor="end" fill="#000" font-family="Liberation Sans">10</text><line x1="245.5" y1="424.5" x2="249" y2="424.5" stroke="#000" stroke-width="1"/><text x="243.5" y="428.1" font-size="11" text-anchor="end" fill="#000" font-family="Liberation Sans">15</text><line x1="245.5" y1="389.5" x2="249" y2="389.5" stroke="#000" stroke-width="1"/><text x="243.5" y="393.1" font-size="11" text-anchor="end" fill="#000" font-family="Liberation Sans">20</text><line x1="245.5" y1="354.5" x2="249" y2="354.5" stroke="#000" stroke-width="1"/><text x="243.5" y="358.1" font-size="11" text-anchor="end" fill="#000" font-family="Liberation Sans">25</text><line x1="245.5" y1="319.5" x2="249" y2="319.5" stroke="#000" stroke-width="1"/><text x="243.5" y="323.1" font-size="11" text-anchor="end" fill="#000" font-family="Liberation Sans">30</text><line x1="245.5" y1="284.5" x2="249" y2="284.5" stroke="#000" stroke-width="1"/><text x="243.5" y="288.1" font-size="11" text-anchor="end" fill="#000" font-family="Liberation Sans">35</text><line x1="245.5" y1="249.5" x2="249" y2="249.5" stroke="#000" stroke-width="1"/><text x="243.5" y="253.1" font-size="11" text-anchor="end" fill="#000" font-family="Liberation Sans">40</text><line x1="245.5" y1="214.5" x2="249" y2="214.5" stroke="#000" stroke-width="1"/><text x="243.5" y="218.1" font-size="11" text-anchor="end" fill="#000" font-family="Liberation Sans">45</text><line x1="245.5" y1="179.5" x2="249" y2="179.5" stroke="#000" stroke-width="1"/><text x="243.5" y="183.1" font-size="11" text-anchor="end" fill="#000" font-family="Liberation Sans">50</text><line x1="247" y1="520.75" x2="249" y2="520.75" stroke="#000" stroke-width="1"/><line x1="247" y1="512.00" x2="249" y2="512.00" stroke="#000" stroke-width="1"/><line x1="247" y1="503.25" x2="249" y2="503.25" stroke="#000" stroke-width="1"/><line x1="247" y1="485.75" x2="249" y2="485.75" stroke="#000" stroke-width="1"/><line x1="247" y1="477.00" x2="249" y2="477.00" stroke="#000" stroke-width="1"/><line x1="247" y1="468.25" x2="249" y2="468.25" stroke="#000" stroke-width="1"/><line x1="247" y1="450.75" x2="249" y2="450.75" stroke="#000" stroke-width="1"/><line x1="247" y1="442.00" x2="249" y2="442.00" stroke="#000" stroke-width="1"/><line x1="247" y1="433.25" x2="249" y2="433.25" stroke="#000" stroke-width="1"/><line x1="247" y1="415.75" x2="249" y2="415.75" stroke="#000" stroke-width="1"/><line x1="247" y1="407.00" x2="249" y2="407.00" stroke="#000" stroke-width="1"/><line x1="247" y1="398.25" x2="249" y2="398.25" stroke="#000" stroke-width="1"/><line x1="247" y1="380.75" x2="249" y2="380.75" stroke="#000" stroke-width="1"/><line x1="247" y1="372.00" x2="249" y2="372.00" stroke="#000" stroke-width="1"/><line x1="247" y1="363.25" x2="249" y2="363.25" stroke="#000" stroke-width="1"/><line x1="247" y1="345.75" x2="249" y2="345.75" stroke="#000" stroke-width="1"/><line x1="247" y1="337.00" x2="249" y2="337.00" stroke="#000" stroke-width="1"/><line x1="247" y1="328.25" x2="249" y2="328.25" stroke="#000" stroke-width="1"/><line x1="247" y1="310.75" x2="249" y2="310.75" stroke="#000" stroke-width="1"/><line x1="247" y1="302.00" x2="249" y2="302.00" stroke="#000" stroke-width="1"/><line x1="247" y1="293.25" x2="249" y2="293.25" stroke="#000" stroke-width="1"/><line x1="247" y1="275.75" x2="249" y2="275.75" stroke="#000" stroke-width="1"/><line x1="247" y1="267.00" x2="249" y2="267.00" stroke="#000" stroke-width="1"/><line x1="247" y1="258.25" x2="249" y2="258.25" stroke="#000" stroke-width="1"/><line x1="247" y1="240.75" x2="249" y2="240.75" stroke="#000" stroke-width="1"/><line x1="247" y1="232.00" x2="249" y2="232.00" stroke="#000" stroke-width="1"/><line x1="247" y1="223.25" x2="249" y2="223.25" stroke="#000" stroke-width="1"/><line x1="247" y1="205.75" x2="249" y2="205.75" stroke="#000" stroke-width="1"/><line x1="247" y1="197.00" x2="249" y2="197.00" stroke="#000" stroke-width="1"/><line x1="247" y1="188.25" x2="249" y2="188.25" stroke="#000" stroke-width="1"/><line x1="264.2" y1="531" x2="264.2" y2="535" stroke="#000" stroke-width="1"/><line x1="312.6" y1="531" x2="312.6" y2="535" stroke="#000" stroke-width="1"/><line x1="361.0" y1="531" x2="361.0" y2="535" stroke="#000" stroke-width="1"/><line x1="409.5" y1="531" x2="409.5" y2="535" stroke="#000" stroke-width="1"/><line x1="457.9" y1="531" x2="457.9" y2="535" stroke="#000" stroke-width="1"/><line x1="506.3" y1="531" x2="506.3" y2="535" stroke="#000" stroke-width="1"/><line x1="554.7" y1="531" x2="554.7" y2="535" stroke="#000" stroke-width="1"/><line x1="603.1" y1="531" x2="603.1" y2="535" stroke="#000" stroke-width="1"/><line x1="651.6" y1="531" x2="651.6" y2="535" stroke="#000" stroke-width="1"/><line x1="700.0" y1="531" x2="700.0" y2="535" stroke="#000" stroke-width="1"/><text x="264.2" y="546.7" font-size="11" text-anchor="middle" letter-spacing="-0.1" fill="#000" font-family="Liberation Sans">Sun 28.12.2008 - Sat 03.01.2009</text><text x="457.4" y="546.7" font-size="11" text-anchor="middle" letter-spacing="-0.1" fill="#000" font-family="Liberation Sans">Sun 01.03.2009 - Sat 07.03.2009</text><text x="650.8" y="546.7" font-size="11" text-anchor="middle" letter-spacing="-0.1" fill="#000" font-family="Liberation Sans">Sun 03.05.2009 - Sat 09.05.2009</text><rect x="339" y="567" width="325" height="17" fill="#000"/><rect x="337.5" y="565.5" width="324" height="16" fill="#fff" stroke="#000" stroke-width="1"/><rect x="342.5" y="569.5" width="19" height="8" fill="#4a6e94" stroke="#000" stroke-width="1"/><text x="365.5" y="577.5" font-size="11" fill="#000" letter-spacing="-0.5" font-family="Liberation Sans">Sessions</text><line x1="447.5" y1="573.5" x2="468" y2="573.5" stroke="#e0604c" stroke-width="2"/><text x="470.8" y="577.5" font-size="11" fill="#000" font-family="Liberation Sans">Average</text><line x1="552" y1="573.5" x2="572" y2="573.5" stroke="#7070e6" stroke-width="2"/><text x="575" y="577.5" font-size="11" fill="#000" font-family="Liberation Sans">Moving average</text></svg>
<div style="left:753px;top:81px;width:93px;height:25px;background:linear-gradient(#fbfcfe,#eceef7);border:1px solid #3b4660;border-bottom:none;box-sizing:border-box;"></div>
<span class="t" style="left:780.4px;top:87.34px;font-size:12px;line-height:12px;color:#10182a;letter-spacing:-0.391px;">Parameters</span>
<div style="left:751px;top:105px;width:201px;height:582px;background:#fff;border:1px solid #3b4660;box-sizing:border-box;"></div>
<div style="left:753px;top:107px;width:197px;height:578px;background:#fffefb;border-top:3px solid #8c8c8c;border-left:3px solid #8c8c8c;border-bottom:3px solid #f4f4f4;border-right:3px solid #f4f4f4;box-sizing:border-box;"></div>
<div style="left:930px;top:110px;width:16px;height:572px;background:linear-gradient(90deg,#e9e9e9,#f2f2f2 40%,#ececec);"></div>
<div style="left:930px;top:334px;width:15px;height:210px;background:linear-gradient(90deg,#f3f3f3 0%,#ececec 45%,#d9d9dc 55%,#cfcfd4 100%);border:1px solid #8e8f8f;border-radius:2px;box-sizing:border-box;"></div>
<div style="left:757px;top:110px;width:173px;height:571px;overflow:hidden;">
<div style="left:4px;top:16px;width:164px;height:22px;background:#4a6d91;"></div>
<span class="t" style="left:12.200000000000045px;top:21.69px;font-size:11px;line-height:11px;color:#fff;font-weight:bold;letter-spacing:0px;">File</span>
<div style="left:4px;top:38px;width:164px;height:309px;border:2px solid #4a6d91;border-top:none;box-sizing:border-box;background:#fff;"></div>
<div style="left:4px;top:368px;width:164px;height:22px;background:#4a6d91;"></div>
<span class="t" style="left:12.200000000000045px;top:373.69px;font-size:11px;line-height:11px;color:#fff;font-weight:bold;letter-spacing:0.7px;">Referrer</span>
<div style="left:4px;top:412px;width:164px;height:22px;background:#4a6d91;"></div>
<span class="t" style="left:12.200000000000045px;top:417.69px;font-size:11px;line-height:11px;color:#fff;font-weight:bold;letter-spacing:0.25px;">Visitor</span>
<div style="left:4px;top:434px;width:164px;height:170px;border:2px solid #4a6d91;border-top:none;box-sizing:border-box;background:#fff;"></div>
<span class="t" style="left:32px;top:48.09px;font-size:11px;line-height:11px;color:#000;letter-spacing:-0.378px;">Same hit match</span>
<div style="left:16px;top:47px;width:12px;height:12px;background:linear-gradient(135deg,#d8d8d8,#f4f4f4);border:1px solid #8e8f8f;box-sizing:border-box;"></div>
<span class="t" style="left:15.799999999999955px;top:69.39px;font-size:11px;line-height:11px;color:#000;letter-spacing:-0.3px;">File wildcards</span>
<div style="left:16px;top:84px;width:140px;height:20px;background:#fff;border:1px solid #c9c9c9;border-radius:2px;box-sizing:border-box;"></div>
<span class="t" style="left:19.5px;top:88.19px;font-size:11px;line-height:11px;color:#000;letter-spacing:0.38px;">*.html,*.php</span>
<span class="t" style="left:15.799999999999955px;top:113.19px;font-size:11px;line-height:11px;color:#000;letter-spacing:-0.05px;">Query</span>
<div style="left:16px;top:128px;width:140px;height:20px;background:#fff;border:1px solid #c9c9c9;border-radius:2px;box-sizing:border-box;"></div>
<span class="t" style="left:15.799999999999955px;top:157.94px;font-size:11px;line-height:11px;color:#000;letter-spacing:-0.06px;">Status</span>
<div style="left:16px;top:172px;width:140px;height:20px;background:#fff;border:1px solid #c9c9c9;border-radius:2px;box-sizing:border-box;"></div>
<span class="t" style="left:15.799999999999955px;top:201.69px;font-size:11px;line-height:11px;color:#000;letter-spacing:-0.05px;">Hit bandwidth</span>
<div style="left:16px;top:216px;width:50px;height:21px;background:linear-gradient(#f2f2f2,#dedede);border:1px solid #8a8a8a;border-radius:3px;box-sizing:border-box;"></div>
<span class="t" style="left:19px;top:219.84px;font-size:12px;line-height:12px;color:#000;">&gt;=</span>
<div style="left:69px;top:216px;width:87px;height:21px;background:#fff;border:1px solid #c9c9c9;border-radius:2px;box-sizing:border-box;"></div>
<span class="t" style="left:72.5px;top:220.19px;font-size:11px;line-height:11px;color:#000;letter-spacing:-0.2px;">0 KB</span>
<span class="t" style="left:15.799999999999955px;top:245.44px;font-size:11px;line-height:11px;color:#000;letter-spacing:-0.3px;">Path</span>
<div style="left:16px;top:260.5px;width:140px;height:20px;background:#fff;border:1px solid #c9c9c9;border-radius:2px;box-sizing:border-box;"></div>
<span class="t" style="left:15.799999999999955px;top:289.19px;font-size:11px;line-height:11px;color:#6d6d6d;letter-spacing:-0.15px;">Add this as goal</span>
<span class="t" style="left:15.799999999999955px;top:307.94px;font-size:11px;line-height:11px;color:#6d6d6d;letter-spacing:-0.3px;">Edit goals</span>
<span class="t" style="left:15.799999999999955px;top:327.19px;font-size:11px;line-height:11px;color:#6d6d6d;letter-spacing:-0.03px;">Fill from goal</span>
<span class="t" style="left:15.799999999999955px;top:443.69px;font-size:11px;line-height:11px;color:#000;letter-spacing:-0.3px;">Visitor&#x27;s IP address</span>
<div style="left:16px;top:459.5px;width:140px;height:20px;background:#fff;border:1px solid #c9c9c9;border-radius:2px;box-sizing:border-box;"></div>
<span class="t" style="left:15.799999999999955px;top:490.39px;font-size:11px;line-height:11px;color:#000;letter-spacing:-0.24px;">Visitor&#x27;s host name</span>
<div style="left:16px;top:505.5px;width:140px;height:20px;background:#fff;border:1px solid #c9c9c9;border-radius:2px;box-sizing:border-box;"></div>
<span class="t" style="left:15.799999999999955px;top:535.09px;font-size:11px;line-height:11px;color:#000;letter-spacing:0.05px;">Country</span>
<div style="left:16px;top:550px;width:140px;height:20px;background:linear-gradient(#f2f2f2,#dedede);border:1px solid #8a8a8a;border-radius:3px;box-sizing:border-box;"></div>
<span class="t" style="left:19.5px;top:554.34px;font-size:12px;line-height:12px;color:#000;letter-spacing:-0.62px;">United States</span>
</div>
<svg style="position:absolute;left:10px;top:9px" width="16" height="16" viewBox="0 0 16 16"><circle cx="8" cy="8" r="7.5" fill="#c848a8"/><path d="M8 .5A7.5 7.5 0 0 0 .5 8H8z" fill="#5a80b8"/><path d="M.5 8A7.5 7.5 0 0 0 8 15.5V8z" fill="#60b040"/><path d="M10 .5L4 9h3.5L5 15.5 13 6H9.5L12.5 .5z" fill="#f88010" stroke="#c04800" stroke-width=".5"/></svg>
<svg style="position:absolute;left:862px;top:11px;" width="28" height="14" viewBox="0 0 28 14"><rect x=".5" y=".5" width="27" height="13" rx="2.5" fill="url(#gBtnMin)" stroke="#5a6a80"/><rect x="1.5" y="1.5" width="25" height="11" rx="2" fill="none" stroke="#f0f6ff" stroke-opacity=".6"/><rect x="9.5" y="6.5" width="10" height="3" rx=".5" fill="#fff" stroke="#3a4a60"/></svg>
<svg style="position:absolute;left:892px;top:11px;" width="28" height="14" viewBox="0 0 28 14"><rect x=".5" y=".5" width="27" height="13" rx="2.5" fill="url(#gBtnMin)" stroke="#5a6a80"/><rect x="1.5" y="1.5" width="25" height="11" rx="2" fill="none" stroke="#f0f6ff" stroke-opacity=".6"/><rect x="9.5" y="3.5" width="10" height="7" fill="#fff" stroke="#3a4a60"/><rect x="12" y="6" width="5" height="2" fill="#7a8aa0" stroke="#3a4a60" stroke-width=".8"/></svg>
<svg style="position:absolute;left:922px;top:11px;" width="28" height="14" viewBox="0 0 28 14"><rect x=".5" y=".5" width="27" height="13" rx="2.5" fill="url(#gBtnClose)" stroke="#401818"/><path d="M10 3.5l8 7M18 3.5l-8 7" stroke="#3a1010" stroke-width="3.6"/><path d="M10 3.5l8 7M18 3.5l-8 7" stroke="#fff" stroke-width="2.2"/></svg>
<div style="left:11px;top:34px;width:2px;height:2px;background:#b83030;"></div>
<div style="left:11px;top:39px;width:2px;height:2px;background:#b83030;"></div>
<div style="left:11px;top:44px;width:2px;height:2px;background:#b83030;"></div>
<div style="left:12px;top:59px;width:2px;height:2px;background:#b83030;"></div>
<div style="left:12px;top:62px;width:2px;height:2px;background:#b83030;"></div>
<div style="left:12px;top:65px;width:2px;height:2px;background:#b83030;"></div>
<div style="left:12px;top:68px;width:2px;height:2px;background:#b83030;"></div>
<div style="left:12px;top:71px;width:2px;height:2px;background:#b83030;"></div>
<svg style="position:absolute;left:22px;top:58px" width="14" height="16" viewBox="0 0 14 16"><path d="M.5 .5h9l3.5 3.5v11.5H.5z" fill="url(#gDoc)" stroke="#8a94b4"/><path d="M9.5 .5v3.5h3.5z" fill="#a8b4d8" stroke="#8a94b4" stroke-width=".6"/></svg>
<svg style="position:absolute;left:43px;top:57.5px" width="17" height="17" viewBox="0 0 17 17"><path d="M.8 6.5l1.5-1.8h4l1 1.3h6.5v9.5H.8z" fill="#f0d870" stroke="#a88a30" stroke-width=".9"/><path d="M.8 15.5l2-6.5h13l-2 6.5z" fill="#fbe890" stroke="#b09030" stroke-width=".8"/><path d="M4.5 1c3.5-.6 6 .8 7.3 3.5l1.7-1-1 5.2-4.8-2 1.7-.9c-1-1.6-2.6-2.5-4.9-2.2z" fill="#38c838" stroke="#108010" stroke-width=".7"/></svg>
<svg style="position:absolute;left:66px;top:65px" width="5" height="3" viewBox="0 0 5 3"><path d="M0 0h5l-2.5 3z" fill="#000"/></svg>
<svg style="position:absolute;left:79px;top:59px" width="14" height="14" viewBox="0 0 14 14"><path d="M.8 .8h12.4v12.4H.8z" fill="#3c3c9c"/><rect x="3" y=".8" width="8" height="6.2" fill="#fbfbff"/><path d="M4 3h6M4 5h6" stroke="#a8a8c0" stroke-width=".8"/><rect x="3.5" y="9" width="7" height="4.2" fill="#e8e8f8"/><rect x="4.5" y="10" width="2" height="3.2" fill="#2a2a70"/></svg>
<svg style="position:absolute;left:101px;top:58px" width="16" height="16" viewBox="0 0 16 16"><path d="M.5 5.5l2-2h2v10.5H.5z" fill="#e8c030"/><rect x=".5" y="6" width="15" height="8.5" rx="1" fill="#f8e070" stroke="#c09820" stroke-width=".9"/><rect x="5.5" y="2.5" width="8" height="7.5" fill="#fff" stroke="#1a1a50" stroke-width="1.1"/><path d="M7 6l1.8 2.2L15.5 .5" fill="none" stroke="#e02020" stroke-width="1.4"/></svg>
<svg style="position:absolute;left:181px;top:59px" width="16" height="14" viewBox="0 0 16 14"><rect x=".7" y=".7" width="14.6" height="12.6" fill="#fbfeff" stroke="#18284a" stroke-width="1.4"/><circle cx="8" cy="7" r="3.2" fill="#e8b820"/><circle cx="8" cy="7" r="1.2" fill="#fff4c0"/><path d="M8 2.5v2M8 9.5v2M3.5 7h2M10.5 7h2M4.8 3.8l1.3 1.3M9.9 8.9l1.3 1.3M11.2 3.8l-1.3 1.3M6.1 8.9l-1.3 1.3" stroke="#c89010" stroke-width="1.1"/></svg>
<div style="left:250px;top:56px;width:1px;height:20px;background:#b8bccc;"></div>
<div style="left:251px;top:56px;width:1px;height:20px;background:#fff;"></div>
<svg style="position:absolute;left:256px;top:58px" width="16" height="16" viewBox="0 0 16 16"><circle cx="8" cy="8" r="7.6" fill="url(#gGreen)" stroke="#0c6a0c" stroke-width=".6"/><path d="M3 8l4.2-4v2.5h5.5v3H7.2V12z" fill="#fff"/></svg>
<svg style="position:absolute;left:308px;top:65px" width="5" height="3" viewBox="0 0 5 3"><path d="M0 0h5l-2.5 3z" fill="#000"/></svg>
<svg style="position:absolute;left:320px;top:58px" width="16" height="16" viewBox="0 0 16 16"><circle cx="8" cy="8" r="7.6" fill="url(#gGray)" stroke="#a0a0a8" stroke-width=".6"/><path d="M6 4.5l3.5 3.5-3.5 3.5" fill="none" stroke="#e8e8ee" stroke-width="2"/></svg>
<svg style="position:absolute;left:343px;top:65px" width="5" height="3" viewBox="0 0 5 3"><path d="M0 0h5l-2.5 3z" fill="#9aa0b0"/></svg>
<svg style="position:absolute;left:355px;top:57.5px" width="16" height="16" viewBox="0 0 16 16"><path d="M2 8.5v5.5h5.5l6.5-2V6z" fill="#f8fbff" stroke="#707888" stroke-width=".8"/><path d="M8 8.5l5.5-2.5v6l-5.5 2z" fill="#6cb8e8"/><path d="M.5 8l6.5-6.5 2-1 6 5.5-7.5 3.5z" fill="#f09010" stroke="#c05808" stroke-width=".6"/><path d="M3 6l4-4 3 1-4 4z" fill="#ffc040"/></svg>
<svg style="position:absolute;left:379px;top:58px" width="14" height="16" viewBox="0 0 14 16"><path d="M.5 .5h9l3.5 3.5v11.5H.5z" fill="#f4fbff" stroke="#8a94b4"/><path d="M9.5 .5v3.5h3.5z" fill="#a8b4d8"/><path d="M3.5 7.5c.8-2.5 4.5-3 6-.8" fill="none" stroke="#18a018" stroke-width="1.4"/><path d="M11 5l-.2 3-2.8-.8z" fill="#18a018"/><path d="M10 10c-.8 2.5-4.5 3-6 .8" fill="none" stroke="#18a018" stroke-width="1.4"/><path d="M2.5 12.5l.2-3 2.8.8z" fill="#18a018"/></svg>
<div style="left:444px;top:56px;width:1px;height:20px;background:#b8bccc;"></div>
<div style="left:445px;top:56px;width:1px;height:20px;background:#fff;"></div>
<svg style="position:absolute;left:450px;top:58px" width="16" height="16" viewBox="0 0 16 16"><circle cx="8" cy="8" r="7" fill="url(#gClock)" stroke="#3a5a78" stroke-width="1.4"/><path d="M8 2.5V8H3.5" fill="none" stroke="#4a6878" stroke-width="1.3"/></svg>
<svg style="position:absolute;left:537px;top:65px" width="5" height="3" viewBox="0 0 5 3"><path d="M0 0h5l-2.5 3z" fill="#000"/></svg>
<svg style="position:absolute;left:550px;top:57px" width="16" height="16" viewBox="0 0 16 16"><ellipse cx="11.4" cy="9.3" rx="3.3" ry="4.6" fill="url(#gYelP)" stroke="#9a6a10" stroke-width=".6"/><circle cx="10.9" cy="3.6" r="2.6" fill="#fce070" stroke="#a07818" stroke-width=".6"/><path d="M1.3 15.5C.8 12 2 8.8 6 8.8s5.6 3 5 6.7z" fill="url(#gBlueP)" stroke="#2a5a98" stroke-width=".6"/><circle cx="6.2" cy="6.3" r="2.9" fill="#8adcf4" stroke="#2a6aa8" stroke-width=".6"/><ellipse cx="5.3" cy="5.6" rx="1.2" ry="1" fill="#e8fbff" opacity=".8"/></svg>
<svg style="position:absolute;left:616px;top:65px" width="5" height="3" viewBox="0 0 5 3"><path d="M0 0h5l-2.5 3z" fill="#000"/></svg>
<svg style="position:absolute;left:17px;top:85px" width="14" height="16" viewBox="0 0 16 16"><rect x="1.5" y="0.5" width="13" height="15" fill="#fbfbfb" stroke="#8e98aa"/><rect x="2" y="1" width="12" height="3" fill="#6a98d4"/><path d="M2 6.5h12M2 9h12M2 11.5h12M2 14h12" stroke="#d8c8c8" stroke-width="1"/><path d="M5.5 4v11M10.5 4v11" stroke="#e0e4ec" stroke-width="1"/></svg>
<svg style="position:absolute;left:186px;top:86px" width="15" height="13" viewBox="0 0 15 13"><rect x=".5" y=".5" width="14" height="12" fill="#e8f4ea" stroke="#6a84a8"/><rect x="1" y="1" width="13" height="2" fill="#a8bce0"/><path d="M7.5 3v9.5" stroke="#6a84a8" stroke-width="1"/><rect x="1" y="3" width="6" height="9.5" fill="#c8f0c0"/><path d="M8.5 5.5h2v-2l3 4-3 4v-2h-2z" fill="#30a830"/></svg>
<svg style="position:absolute;left:222px;top:87px" width="16" height="16" viewBox="0 0 16 16"><ellipse cx="11.4" cy="9.3" rx="3.3" ry="4.6" fill="url(#gYelP)" stroke="#9a6a10" stroke-width=".6"/><circle cx="10.9" cy="3.6" r="2.6" fill="#fce070" stroke="#a07818" stroke-width=".6"/><path d="M1.3 15.5C.8 12 2 8.8 6 8.8s5.6 3 5 6.7z" fill="url(#gBlueP)" stroke="#2a5a98" stroke-width=".6"/><circle cx="6.2" cy="6.3" r="2.9" fill="#8adcf4" stroke="#2a6aa8" stroke-width=".6"/><ellipse cx="5.3" cy="5.6" rx="1.2" ry="1" fill="#e8fbff" opacity=".8"/></svg>
<svg style="position:absolute;left:219px;top:112px" width="15" height="17" viewBox="0 0 16 16"><ellipse cx="11.4" cy="9.3" rx="3.3" ry="4.6" fill="url(#gYelP)" stroke="#9a6a10" stroke-width=".6"/><circle cx="10.9" cy="3.6" r="2.6" fill="#fce070" stroke="#a07818" stroke-width=".6"/><path d="M1.3 15.5C.8 12 2 8.8 6 8.8s5.6 3 5 6.7z" fill="url(#gBlueP)" stroke="#2a5a98" stroke-width=".6"/><circle cx="6.2" cy="6.3" r="2.9" fill="#8adcf4" stroke="#2a6aa8" stroke-width=".6"/><ellipse cx="5.3" cy="5.6" rx="1.2" ry="1" fill="#e8fbff" opacity=".8"/></svg>
<svg style="position:absolute;left:722px;top:112px" width="16" height="16" viewBox="0 0 16 16"><path d="M8 .8c4.2 0 7.2 2.6 7.2 6.2 0 3-2 5-4.5 5.8L8 15.5l-.5-2.6C3.5 12.6.8 10.3.8 7 .8 3.4 3.8.8 8 .8z" fill="#101c40" transform="translate(.7 .6)"/><path d="M8 .8c4.2 0 7.2 2.6 7.2 6.2 0 3-2 5-4.5 5.8L8 15.5l-.5-2.6C3.5 12.6.8 10.3.8 7 .8 3.4 3.8.8 8 .8z" fill="url(#gInfo)" stroke="#c8d4e8" stroke-width=".5"/><circle cx="7.6" cy="3.9" r="1.2" fill="#14205a"/><path d="M5.8 6h2.9v4.8h1v1.1H5.9v-1.1h1V7.1H5.8z" fill="#14205a"/></svg>
<svg style="position:absolute;left:224px;top:640px" width="32" height="32" viewBox="0 0 32 32"><path d="M16 1.5c8.3 0 14.5 5.2 14.5 12.2 0 5.8-4.2 10-9.2 11.6L18.5 30.5l-1.8-5.4C8.2 25 1.5 20.2 1.5 13.7 1.5 6.7 7.7 1.5 16 1.5z" fill="#1c2c58" transform="translate(1 1)"/><path d="M16 1.5c8.3 0 14.5 5.2 14.5 12.2 0 5.8-4.2 10-9.2 11.6L18.5 30.5l-1.8-5.4C8.2 25 1.5 20.2 1.5 13.7 1.5 6.7 7.7 1.5 16 1.5z" fill="url(#gInfo)" stroke="#dde6f4" stroke-width=".8"/><circle cx="15.5" cy="7.5" r="2.4" fill="#1a3490"/><path d="M11.5 11.5h6v9.5h2.2v2.5H11.8V21H14v-7h-2.5z" fill="#1a3490"/></svg>
<svg style="position:absolute;left:759px;top:85px" width="15" height="17" viewBox="0 0 15 17"><ellipse cx="7.5" cy="2.5" rx="7" ry="2" fill="#d8f0f8" stroke="#3a7890" stroke-width=".8"/><path d="M.5 2.8L5.8 9v6.5l3.4-1.5V9l5.3-6.2c-1 1.5-13 1.5-14 0z" fill="url(#gFunnel)" stroke="#2a6478" stroke-width=".6"/></svg>
<div style="left:21.5px;top:46px;width:6px;height:1px;background:#10182a;"></div>
<div style="left:49.3px;top:46px;width:7px;height:1px;background:#10182a;"></div>
<div style="left:118.3px;top:46px;width:7px;height:1px;background:#10182a;"></div>
<div style="left:152.8px;top:46px;width:7px;height:1px;background:#10182a;"></div>
<div style="left:192.1px;top:46px;width:8px;height:1px;background:#10182a;"></div>
<div style="left:201.5px;top:72px;width:8px;height:1px;background:#10182a;"></div>
<div style="left:276.3px;top:72px;width:7px;height:1px;background:#10182a;"></div>
<div style="left:398.6px;top:72px;width:7px;height:1px;background:#10182a;"></div>
<svg style="position:absolute;left:190.5px;top:118px;" width="7" height="4" viewBox="0 0 7 4"><path d="M0 4L3.5 0 7 4z" fill="#303030"/></svg>
<svg style="position:absolute;left:190.5px;top:653px;" width="7" height="4" viewBox="0 0 7 4"><path d="M0 0h7L3.5 4z" fill="#303030"/></svg>
<svg style="position:absolute;left:20px;top:669px;" width="4" height="7" viewBox="0 0 4 7"><path d="M4 0v7L0 3.5z" fill="#303030"/></svg>
<svg style="position:absolute;left:176px;top:669px;" width="4" height="7" viewBox="0 0 4 7"><path d="M0 0v7l4-3.5z" fill="#303030"/></svg>
<svg style="position:absolute;left:934.5px;top:118px;" width="7" height="4" viewBox="0 0 7 4"><path d="M0 4L3.5 0 7 4z" fill="#303030"/></svg>
<svg style="position:absolute;left:934.5px;top:670px;" width="7" height="4" viewBox="0 0 7 4"><path d="M0 0h7L3.5 4z" fill="#303030"/></svg>
<svg style="position:absolute;left:728px;top:640px;" width="7" height="4" viewBox="0 0 7 4"><path d="M0 4L3.5 0 7 4z" fill="#808080"/></svg>
<svg style="position:absolute;left:728px;top:667px;" width="7" height="4" viewBox="0 0 7 4"><path d="M0 0h7L3.5 4z" fill="#808080"/></svg>
<div style="left:190px;top:254px;width:6px;height:1px;background:#404040;"></div>
<div style="left:190px;top:257px;width:6px;height:1px;background:#404040;"></div>
<div style="left:190px;top:260px;width:6px;height:1px;background:#404040;"></div>
<div style="left:91px;top:670px;width:1px;height:6px;background:#404040;"></div>
<div style="left:94px;top:670px;width:1px;height:6px;background:#404040;"></div>
<div style="left:97px;top:670px;width:1px;height:6px;background:#404040;"></div>
<div style="left:934px;top:436px;width:6px;height:1px;background:#404040;"></div>
<div style="left:934px;top:439px;width:6px;height:1px;background:#404040;"></div>
<div style="left:934px;top:442px;width:6px;height:1px;background:#404040;"></div>
<div style="left:209px;top:368px;width:1px;height:2px;background:#6a7080;"></div>
<div style="left:209px;top:372px;width:1px;height:2px;background:#6a7080;"></div>
<div style="left:209px;top:376px;width:1px;height:2px;background:#6a7080;"></div>
<div style="left:209px;top:380px;width:1px;height:2px;background:#6a7080;"></div>
<div style="left:209px;top:384px;width:1px;height:2px;background:#6a7080;"></div>
<div style="left:209px;top:388px;width:1px;height:2px;background:#6a7080;"></div>
<div style="left:209px;top:392px;width:1px;height:2px;background:#6a7080;"></div>
<div style="left:748px;top:368px;width:1px;height:2px;background:#6a7080;"></div>
<div style="left:748px;top:372px;width:1px;height:2px;background:#6a7080;"></div>
<div style="left:748px;top:376px;width:1px;height:2px;background:#6a7080;"></div>
<div style="left:748px;top:380px;width:1px;height:2px;background:#6a7080;"></div>
<div style="left:748px;top:384px;width:1px;height:2px;background:#6a7080;"></div>
<div style="left:748px;top:388px;width:1px;height:2px;background:#6a7080;"></div>
<div style="left:748px;top:392px;width:1px;height:2px;background:#6a7080;"></div>
<svg style="position:absolute;left:882px;top:153px" width="11" height="16" viewBox="0 0 11 16"><path d="M2.5 7V4.5a3 3 0 0 1 6 0V7" fill="none" stroke="#8a8a90" stroke-width="1.6"/><rect x=".5" y="6.5" width="10" height="8.5" rx="1.5" fill="url(#gLock)" stroke="#a07818" stroke-width=".6"/><rect x="1.5" y="7.5" width="8" height="2" fill="#fff4c0" opacity=".7"/></svg>
<svg style="position:absolute;left:902px;top:153px" width="16" height="16" viewBox="0 0 16 16"><circle cx="8" cy="8" r="7.6" fill="url(#gHelp)" stroke="#1a4a98" stroke-width=".5"/><text x="8" y="12.5" text-anchor="middle" font-family="Liberation Sans" font-weight="bold" font-size="12" fill="#fff">?</text></svg>
<svg style="position:absolute;left:882px;top:549px" width="11" height="16" viewBox="0 0 11 16"><path d="M2.5 7V4.5a3 3 0 0 1 6 0V7" fill="none" stroke="#8a8a90" stroke-width="1.6"/><rect x=".5" y="6.5" width="10" height="8.5" rx="1.5" fill="url(#gLock)" stroke="#a07818" stroke-width=".6"/><rect x="1.5" y="7.5" width="8" height="2" fill="#fff4c0" opacity=".7"/></svg>
<svg style="position:absolute;left:902px;top:549px" width="16" height="16" viewBox="0 0 16 16"><circle cx="8" cy="8" r="7.6" fill="url(#gHelp)" stroke="#1a4a98" stroke-width=".5"/><text x="8" y="12.5" text-anchor="middle" font-family="Liberation Sans" font-weight="bold" font-size="12" fill="#fff">?</text></svg>
<svg style="position:absolute;left:906.5px;top:131.5px;" width="9" height="10" viewBox="0 0 9 10"><path d="M.8 5L4.5 1.5 8.2 5M.8 8.8L4.5 5.3 8.2 8.8" fill="none" stroke="#fff" stroke-width="1.5"/></svg>
<svg style="position:absolute;left:906.5px;top:483.5px;" width="9" height="10" viewBox="0 0 9 10"><path d="M.8 1.2L4.5 4.7 8.2 1.2M.8 5L4.5 8.5 8.2 5" fill="none" stroke="#fff" stroke-width="1.5"/></svg>
<svg style="position:absolute;left:906.5px;top:527.5px;" width="9" height="10" viewBox="0 0 9 10"><path d="M.8 5L4.5 1.5 8.2 5M.8 8.8L4.5 5.3 8.2 8.8" fill="none" stroke="#fff" stroke-width="1.5"/></svg>
<svg style="position:absolute;left:901px;top:203px;" width="7" height="4" viewBox="0 0 7 4"><path d="M0 0h7L3.5 4z" fill="#000"/></svg>
<svg style="position:absolute;left:901px;top:247px;" width="7" height="4" viewBox="0 0 7 4"><path d="M0 0h7L3.5 4z" fill="#000"/></svg>
<svg style="position:absolute;left:901px;top:291px;" width="7" height="4" viewBox="0 0 7 4"><path d="M0 0h7L3.5 4z" fill="#000"/></svg>
<svg style="position:absolute;left:901px;top:379.5px;" width="7" height="4" viewBox="0 0 7 4"><path d="M0 0h7L3.5 4z" fill="#000"/></svg>
<svg style="position:absolute;left:901px;top:578.5px;" width="7" height="4" viewBox="0 0 7 4"><path d="M0 0h7L3.5 4z" fill="#000"/></svg>
<svg style="position:absolute;left:901px;top:624.5px;" width="7" height="4" viewBox="0 0 7 4"><path d="M0 0h7L3.5 4z" fill="#000"/></svg>
<svg style="position:absolute;left:901px;top:669px;" width="7" height="4" viewBox="0 0 7 4"><path d="M0 0h7L3.5 4z" fill="#000"/></svg>
<svg style="position:absolute;left:811px;top:335px;" width="7" height="4" viewBox="0 0 7 4"><path d="M0 0h7L3.5 4z" fill="#000"/></svg>
<div style="left:8px;top:687px;width:944px;height:1px;background:#8a8ea4;"></div>
<div style="left:8px;top:688px;width:944px;height:24px;background:linear-gradient(#f8f9fc 0%,#e8ebf5 25%,#d0d5ec 45%,#bfc5e2 55%,#c4c9e6 70%,#d5d1ea 85%,#d6d2ea 100%);"></div>
<div style="left:8px;top:712px;width:944px;height:7px;background:#b4d3e9;"></div>
<div style="left:1px;top:718px;width:958px;height:1px;background:#a8dcec;"></div>
<div style="left:947px;top:700px;width:2px;height:2px;background:#fff;"></div>
<div style="left:946px;top:699px;width:2px;height:2px;background:#a0a4c0;"></div>
<div style="left:943px;top:704px;width:2px;height:2px;background:#fff;"></div>
<div style="left:942px;top:703px;width:2px;height:2px;background:#a0a4c0;"></div>
<div style="left:947px;top:704px;width:2px;height:2px;background:#fff;"></div>
<div style="left:946px;top:703px;width:2px;height:2px;background:#a0a4c0;"></div>
<div style="left:939px;top:708px;width:2px;height:2px;background:#fff;"></div>
<div style="left:938px;top:707px;width:2px;height:2px;background:#a0a4c0;"></div>
<div style="left:943px;top:708px;width:2px;height:2px;background:#fff;"></div>
<div style="left:942px;top:707px;width:2px;height:2px;background:#a0a4c0;"></div>
<div style="left:947px;top:708px;width:2px;height:2px;background:#fff;"></div>
<div style="left:946px;top:707px;width:2px;height:2px;background:#a0a4c0;"></div></body></html>
